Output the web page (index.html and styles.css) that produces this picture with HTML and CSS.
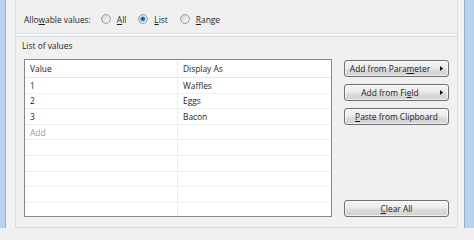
FILE: index.html
```html
<!DOCTYPE html>
<html>
<head>
<meta charset="utf-8">
<link rel="stylesheet" href="styles.css">
</head>
<body>
<div class="frame">
  <div class="edge edge-left"></div>
  <div class="client">
    <div class="group">
      <div class="allow">
        <span class="allow-label">Allo<u>w</u>able values:</span>
        <span class="radio">
          <svg class="radio-dot" width="10" height="10" viewBox="0 0 10 10"><defs><linearGradient id="rg1" x1="0" y1="0" x2="1" y2="1"><stop offset="0" stop-color="#d6d6d6"/><stop offset="1" stop-color="#fbfbfb"/></linearGradient></defs><circle cx="5" cy="5" r="4.4" fill="url(#rg1)" stroke="#8f9091" stroke-width="0.9"/></svg>
          <span><u>A</u>ll</span>
        </span>
        <span class="radio">
          <svg class="radio-dot" width="10" height="10" viewBox="0 0 10 10"><defs><linearGradient id="rg2" x1="0" y1="0" x2="1" y2="1"><stop offset="0" stop-color="#d6d6d6"/><stop offset="1" stop-color="#fbfbfb"/></linearGradient><radialGradient id="dot" cx="0.45" cy="0.45" r="0.6"><stop offset="0" stop-color="#12446e"/><stop offset="0.55" stop-color="#2c7cb8"/><stop offset="1" stop-color="#8fd2f2"/></radialGradient></defs><circle cx="5" cy="5" r="4.4" fill="url(#rg2)" stroke="#8f9091" stroke-width="0.9"/><circle cx="5" cy="5" r="2.6" fill="url(#dot)"/></svg>
          <span><u>L</u>ist</span>
        </span>
        <span class="radio">
          <svg class="radio-dot" width="10" height="10" viewBox="0 0 10 10"><defs><linearGradient id="rg3" x1="0" y1="0" x2="1" y2="1"><stop offset="0" stop-color="#d6d6d6"/><stop offset="1" stop-color="#fbfbfb"/></linearGradient></defs><circle cx="5" cy="5" r="4.4" fill="url(#rg3)" stroke="#8f9091" stroke-width="0.9"/></svg>
          <span><u>R</u>ange</span>
        </span>
      </div>
      <div class="values">
        <div class="caption">List of values</div>
        <div class="values-body">
          <div class="list">
            <div class="list-head">
              <div class="cell cell-value">Value</div>
              <div class="cell cell-display">Display As</div>
            </div>
            <div class="list-rows">
              <div class="list-row"><div class="cell cell-value">1</div><div class="cell cell-display">Waffles</div></div>
              <div class="list-row"><div class="cell cell-value">2</div><div class="cell cell-display">Eggs</div></div>
              <div class="list-row"><div class="cell cell-value">3</div><div class="cell cell-display">Bacon</div></div>
              <div class="list-row"><div class="cell cell-value cell-add">Add</div><div class="cell cell-display"></div></div>
              <div class="list-row"><div class="cell cell-value"></div><div class="cell cell-display"></div></div>
              <div class="list-row"><div class="cell cell-value"></div><div class="cell cell-display"></div></div>
              <div class="list-row"><div class="cell cell-value"></div><div class="cell cell-display"></div></div>
              <div class="list-row"><div class="cell cell-value"></div><div class="cell cell-display"></div></div>
              <div class="list-row"><div class="cell cell-value"></div><div class="cell cell-display"></div></div>
            </div>
          </div>
          <div class="buttons">
            <div class="btn btn-menu"><span class="btn-text">Add from Para<u>m</u>eter</span><span class="btn-arrow"><svg width="3" height="5" viewBox="0 0 3 5"><polygon points="0,0 3,2.5 0,5" fill="#111"/></svg></span></div>
            <div class="btn btn-menu"><span class="btn-text">Add from Fi<u>e</u>ld</span><span class="btn-arrow"><svg width="3" height="5" viewBox="0 0 3 5"><polygon points="0,0 3,2.5 0,5" fill="#111"/></svg></span></div>
            <div class="btn"><span class="btn-text"><u>P</u>aste from Clipboard</span></div>
            <div class="btn btn-clear"><span class="btn-text"><u>C</u>lear All</span></div>
          </div>
        </div>
      </div>
    </div>
  </div>
  <div class="edge edge-right"></div>
</div>
</body>
</html>
```

FILE: styles.css
```css
html, body {
  margin: 0;
  padding: 0;
}
body {
  width: 474px;
  height: 228px;
  overflow: hidden;
  background: #f0f0f0;
  font-family: "Open Sans", "Noto Sans", "Liberation Sans", sans-serif;
  font-size: 8.4px;
  color: #1e1e1e;
}
u {
  text-decoration: underline;
  text-underline-offset: 1px;
  text-decoration-thickness: 1px;
}
.frame {
  display: flex;
  height: 228px;
}
.edge {
  background: #b9d1ea;
}
.edge-left {
  width: 5px;
  border-right: 1px solid #8fafd4;
}
.edge-right {
  width: 9px;
  border-left: 1px solid #8fafd4;
}
.client {
  flex: 1;
  padding: 0 6px 0 9px;
  background: #f3f3f3;
  display: flex;
}
.group {
  flex: 1;
  display: flex;
  flex-direction: column;
  border-left: 1px solid #d5dfe5;
  border-right: 1px solid #d5dfe5;
  border-bottom: 1px solid #d5dfe5;
  background: #f0f0f0;
}
.allow {
  height: 28px;
  padding-top: 5px;
  padding-left: 8px;
  display: flex;
  align-items: center;
  border-bottom: 1px solid #d5dfe5;
  box-shadow: 0 1px 0 #ffffff;
}
.allow-label {
  margin-right: 10px;
}
.radio {
  display: flex;
  align-items: center;
  margin-right: 12px;
}
.radio-dot {
  display: block;
  margin-right: 6px;
}
.values {
  margin-top: 2px;
  border-top: 1px solid #d5dfe5;
  flex: 1;
  display: flex;
  flex-direction: column;
}
.caption {
  height: 18px;
  line-height: 18px;
  padding-left: 6px;
  margin-bottom: 4px;
}
.values-body {
  display: flex;
  padding-left: 8px;
  padding-bottom: 10px;
  gap: 12px;
}
.list {
  width: 306px;
  height: 156px;
  border: 1px solid #828790;
  background: #ffffff;
  overflow: hidden;
}
.list-head {
  display: flex;
  height: 17px;
  border-bottom: 1px solid #e5e5e5;
  box-sizing: border-box;
  height: 18px;
}
.list-rows {
  display: flex;
  flex-direction: column;
}
.list-row {
  display: flex;
  height: 15.6px;
  box-sizing: border-box;
  border-bottom: 1px solid #f0f0f0;
}
.cell {
  display: flex;
  align-items: center;
  padding-left: 5px;
  box-sizing: border-box;
  white-space: nowrap;
}
.cell-value {
  width: 153px;
  border-right: 1px solid #ededed;
}
.cell-display {
  flex: 1;
  padding-left: 5px;
}
.cell-add {
  color: #9a9a9a;
}
.buttons {
  width: 105px;
  display: flex;
  flex-direction: column;
  gap: 7px;
  padding-top: 1px;
}
.btn {
  height: 17px;
  box-sizing: border-box;
  border: 1px solid #707070;
  border-radius: 3px;
  background: linear-gradient(#f4f4f4 0%, #ececec 48%, #dedede 52%, #d1d1d1 100%);
  box-shadow: inset 0 0 0 1px rgba(255, 255, 255, 0.65);
  display: flex;
  align-items: center;
  color: #1a1a1a;
}
.btn-text {
  flex: 1;
  text-align: center;
  white-space: nowrap;
}
.btn-arrow {
  width: 13px;
  display: flex;
  align-items: center;
  padding-left: 5px;
  box-sizing: border-box;
}
.btn-arrow svg {
  display: block;
}
.btn-clear {
  margin-top: auto;
}
```
